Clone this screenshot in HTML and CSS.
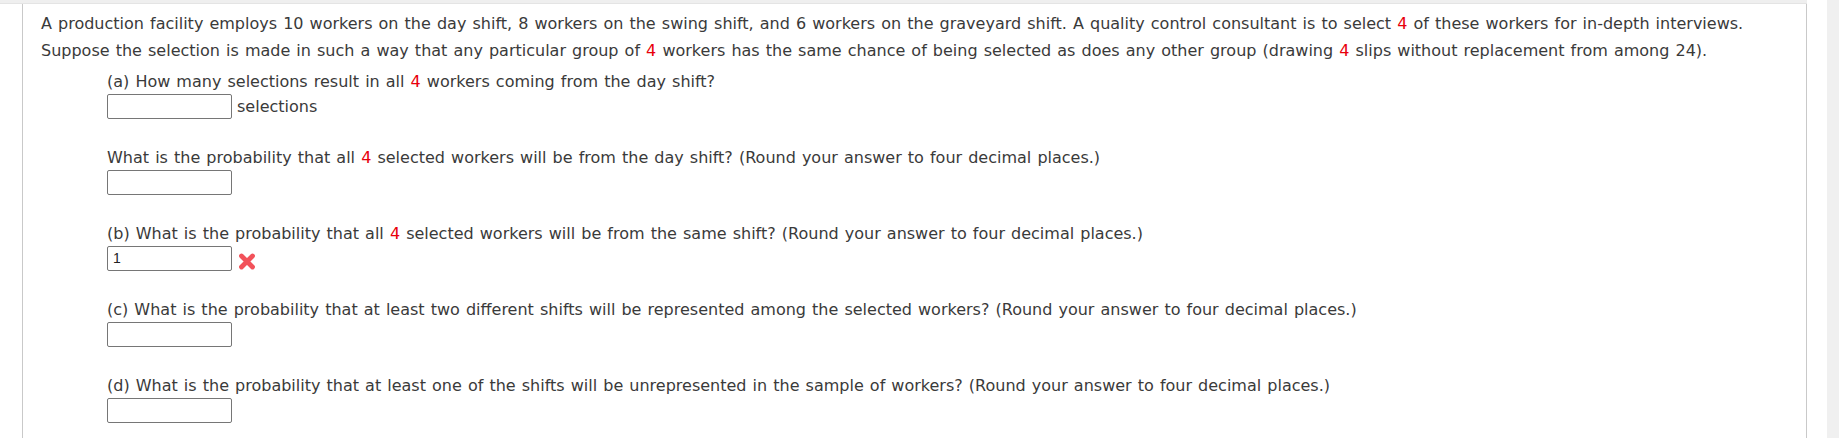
FILE: index.html
```html
<!DOCTYPE html>
<html>
<head>
<meta charset="utf-8">
<link rel="stylesheet" href="styles.css">
</head>
<body>
<div class="page">
  <div class="main">
    <div class="topband"></div>
    <div class="panel">
      <p class="intro">A production facility employs 10 workers on the day shift, 8 workers on the swing shift, and 6 workers on the graveyard shift. A quality control consultant is to select <span class="red">4</span> of these workers for in-depth interviews.<br>Suppose the selection is made in such a way that any particular group of <span class="red">4</span> workers has the same chance of being selected as does any other group (drawing <span class="red">4</span> slips without replacement from among 24).</p>
      <div class="parts">
        <div class="q">(a) How many selections result in all <span class="red">4</span> workers coming from the day shift?</div>
        <div class="answer"><span class="box"></span><span class="unit">selections</span></div>
        <div class="q spaced">What is the probability that all <span class="red">4</span> selected workers will be from the day shift? (Round your answer to four decimal places.)</div>
        <div class="answer"><span class="box"></span></div>
        <div class="q spaced">(b) What is the probability that all <span class="red">4</span> selected workers will be from the same shift? (Round your answer to four decimal places.)</div>
        <div class="answer"><span class="box filled">1</span><svg class="wrong" width="18" height="17" viewBox="0 0 18 17"><path d="M3.5 3 L14.5 14 M14.5 3 L3.5 14" stroke="#f2525a" stroke-width="4.8" stroke-linecap="round"/></svg></div>
        <div class="q spaced">(c) What is the probability that at least two different shifts will be represented among the selected workers? (Round your answer to four decimal places.)</div>
        <div class="answer"><span class="box"></span></div>
        <div class="q spaced">(d) What is the probability that at least one of the shifts will be unrepresented in the sample of workers? (Round your answer to four decimal places.)</div>
        <div class="answer"><span class="box"></span></div>
      </div>
    </div>
  </div>
  <div class="gutter"></div>
  <div class="track"></div>
</div>
</body>
</html>
```
FILE: styles.css
```css
html, body {
  margin: 0;
  padding: 0;
  height: 100%;
  background: #fff;
}
.page {
  display: flex;
  height: 438px;
  overflow: hidden;
  font-family: "DejaVu Sans", Verdana, sans-serif;
  font-size: 16px;
  word-spacing: 1px;
  color: #3a3a3a;
}
.main {
  width: 1807px;
  display: flex;
  flex-direction: column;
}
.topband {
  height: 3px;
  background: #efefef;
  border-bottom: 1px solid #e4e4e4;
}
.panel {
  flex: 1;
  margin-left: 22px;
  border-left: 1px solid #c9c9c9;
  border-right: 1px solid #c9c9c9;
  padding: 6px 0 0 18px;
}
.intro {
  margin: 0;
  line-height: 27px;
  white-space: nowrap;
}
.red {
  color: #e8000b;
}
.parts {
  margin: 4px 0 0 66px;
}
.q {
  padding-top: 2px;
  line-height: 24px;
  white-space: nowrap;
}
.q.spaced {
  margin-top: 25px;
}
.answer {
  display: flex;
  align-items: center;
  height: 25px;
}
.box {
  box-sizing: border-box;
  width: 125px;
  height: 25px;
  border: 1px solid #767676;
  border-radius: 2px;
  font-family: "Liberation Sans", Arial, sans-serif;
  font-size: 14px;
  line-height: 23px;
  padding-left: 5px;
  color: #222;
  word-spacing: 0;
}
.unit {
  margin-left: 5px;
}
.wrong {
  margin-left: 6px;
  margin-top: 6px;
}
.gutter {
  width: 20px;
}
.track {
  width: 12px;
  background: #f0f0f0;
}
```
